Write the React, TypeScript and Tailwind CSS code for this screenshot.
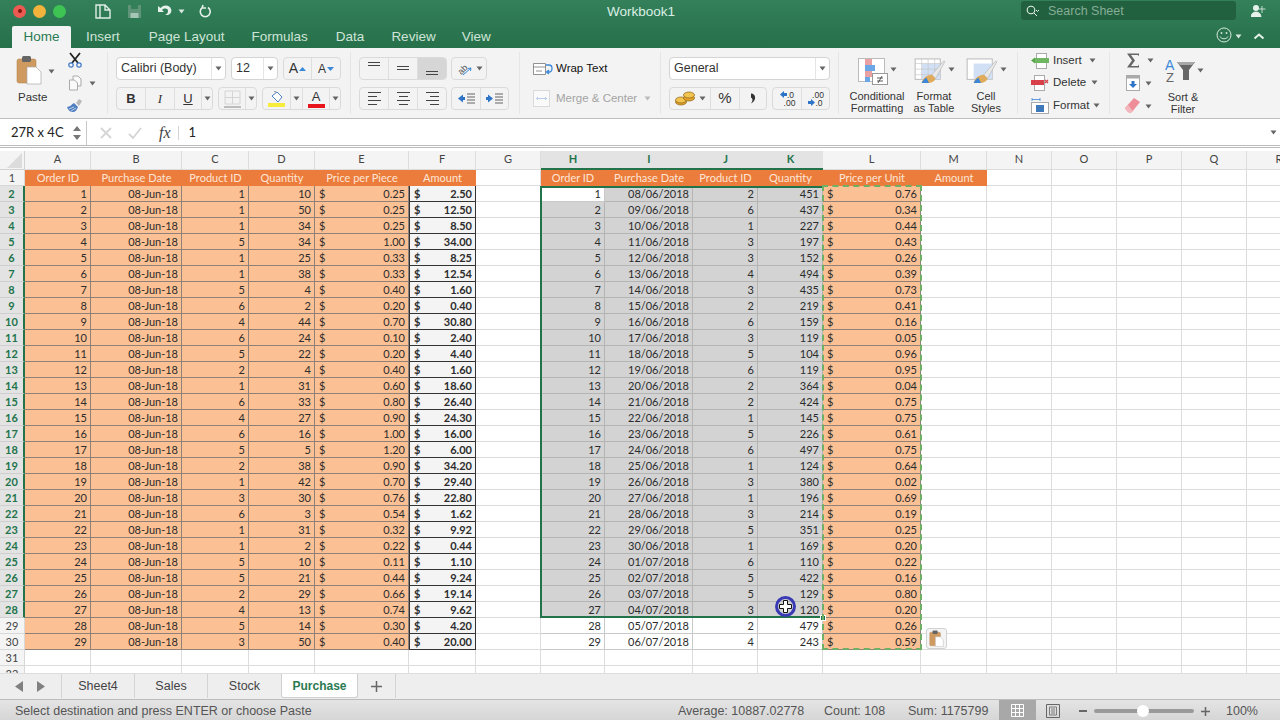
import React from "react";

const leftRows: [number, number, number, string, string][] = [
  [1, 1, 10, "0.25", "2.50"], [2, 1, 50, "0.25", "12.50"], [3, 1, 34, "0.25", "8.50"], [4, 5, 34, "1.00", "34.00"],
  [5, 1, 25, "0.33", "8.25"], [6, 1, 38, "0.33", "12.54"], [7, 5, 4, "0.40", "1.60"], [8, 6, 2, "0.20", "0.40"],
  [9, 4, 44, "0.70", "30.80"], [10, 6, 24, "0.10", "2.40"], [11, 5, 22, "0.20", "4.40"], [12, 2, 4, "0.40", "1.60"],
  [13, 1, 31, "0.60", "18.60"], [14, 6, 33, "0.80", "26.40"], [15, 4, 27, "0.90", "24.30"], [16, 6, 16, "1.00", "16.00"],
  [17, 5, 5, "1.20", "6.00"], [18, 2, 38, "0.90", "34.20"], [19, 1, 42, "0.70", "29.40"], [20, 3, 30, "0.76", "22.80"],
  [21, 6, 3, "0.54", "1.62"], [22, 1, 31, "0.32", "9.92"], [23, 1, 2, "0.22", "0.44"], [24, 5, 10, "0.11", "1.10"],
  [25, 5, 21, "0.44", "9.24"], [26, 2, 29, "0.66", "19.14"], [27, 4, 13, "0.74", "9.62"], [28, 5, 14, "0.30", "4.20"],
  [29, 3, 50, "0.40", "20.00"],
];

const rightRows: [string, number, number, string][] = [
  ["08/06", 2, 451, "0.76"], ["09/06", 6, 437, "0.34"], ["10/06", 1, 227, "0.44"], ["11/06", 3, 197, "0.43"],
  ["12/06", 3, 152, "0.26"], ["13/06", 4, 494, "0.39"], ["14/06", 3, 435, "0.73"], ["15/06", 2, 219, "0.41"],
  ["16/06", 6, 159, "0.16"], ["17/06", 3, 119, "0.05"], ["18/06", 5, 104, "0.96"], ["19/06", 6, 119, "0.95"],
  ["20/06", 2, 364, "0.04"], ["21/06", 2, 424, "0.75"], ["22/06", 1, 145, "0.75"], ["23/06", 5, 226, "0.61"],
  ["24/06", 6, 497, "0.75"], ["25/06", 1, 124, "0.64"], ["26/06", 3, 380, "0.02"], ["27/06", 1, 196, "0.69"],
  ["28/06", 3, 214, "0.19"], ["29/06", 5, 351, "0.25"], ["30/06", 1, 169, "0.20"], ["01/07", 6, 110, "0.22"],
  ["02/07", 5, 422, "0.16"], ["03/07", 5, 129, "0.80"], ["04/07", 3, 120, "0.20"], ["05/07", 2, 479, "0.26"],
  ["06/07", 4, 243, "0.59"],
];

const gridCols =
  "grid grid-cols-[25px_66px_91px_67px_66px_94px_67px_65px_64px_88px_65px_65px_98px_66px_65px_65px_65px_65px_65px]";
const blank = "border-r border-b border-[#dcdcdc]";
const orange = "bg-[#fbc093] border-r border-b border-[#8f8178] text-right pr-[3px]";
const selected = "bg-[#d3d3d3] border-r border-b border-[#b4b4b4] text-right pr-[3px]";
const plain = "border-r border-b border-[#c9c9c9] text-right pr-[3px]";

const Caret = ({ className = "" }: { className?: string }) => (
  <svg width="7" height="5" viewBox="0 0 7 5" className={className}>
    <path d="M0.5 0.5h6L3.5 4.5z" fill="#666" />
  </svg>
);

const Clipboard = ({ w = 26, h = 30 }: { w?: number; h?: number }) => (
  <svg width={w} height={h} viewBox="0 0 26 30">
    <rect x="1" y="4" width="19" height="24" rx="2" fill="#cf9a5f" stroke="#a87a45" strokeWidth="0.5" />
    <rect x="6" y="1" width="9" height="6" rx="1.5" fill="#666" />
    <path d="M11 12h9l5 5v12H11z" fill="#fff" stroke="#aaa" strokeWidth="0.7" />
  </svg>
);

const ScissorsIcon = () => (
  <svg width="16" height="16" viewBox="0 0 16 16">
    <path d="M3 1l8 10M13 1L5 11" stroke="#222" strokeWidth="1.8" />
    <circle cx="4" cy="13" r="2.2" fill="none" stroke="#3c78c4" strokeWidth="1.2" />
    <circle cx="12" cy="13" r="2.2" fill="none" stroke="#3c78c4" strokeWidth="1.2" />
  </svg>
);

const CopyIcon = () => (
  <svg width="15" height="16" viewBox="0 0 15 16">
    <path d="M5 1h5l3 3v7H5z" fill="#fafafa" stroke="#aaa" />
    <path d="M1.500 5h5l3 3v7h-8z" fill="#fafafa" stroke="#aaa" />
  </svg>
);

const BrushIcon = () => (
  <svg width="17" height="15" viewBox="0 0 17 15">
    <path d="M10 5l3-4 3 2-3 5z" fill="#b9b9b9" />
    <path d="M1 9c3 0 5-3 7-4l4 4c-1 3-3 5-5 5-3 0-5-2-6-5z" fill="#4d7fc0" />
    <path d="M3 11l5-2M5 13l5-3" stroke="#dce6f4" strokeWidth="0.8" />
  </svg>
);

const FormatTableIcon = ({ lines }: { lines: boolean }) => (
  <svg width="32" height="26" viewBox="0 0 34 28">
    <rect x="1" y="1" width="27" height="22" fill="#fff" stroke="#b5b5b5" />
    <rect x="8" y="6" width="20" height="17" fill="#d2e0f5" />
    {lines && <path d="M1 6h27M1 12h27M1 18h27M8 1v22M15 1v22M22 1v22" stroke="#c4c4c4" strokeWidth="0.7" />}
    <path d="M19 18L32 3l1 1-10 18z" fill="#e9e9e9" stroke="#aaa" strokeWidth="0.6" />
    <path d="M8 27c1-5 5-9 11-9l4 4c-1 3-4 5-8 5z" fill="#e0ac5c" />
    <path d="M8 27c1-2 2-4 5-6l3 6z" fill="#3e86d6" />
  </svg>
);

const Lines = ({ align }: { align: "left" | "center" | "right" }) => {
  const long = [0, 4, 8, 12];
  const widths = [13, 9, 13, 9];
  return (
    <svg width="15" height="13" viewBox="0 0 15 13">
      {long.map((y, i) => {
        const x = align === "left" ? 1 : align === "right" ? 14 - widths[i] : 7.500 - widths[i] / 2;
        return <path key={y} d={`M${x} ${y + 0.5}h${widths[i]}`} stroke="#444" strokeWidth="1" />;
      })}
    </svg>
  );
};

const Indent = ({ flip }: { flip?: boolean }) => (
  <svg width="17" height="11" viewBox="0 0 17 11">
    <path d={flip ? "M7 5.500L2 1.500v2.500H0v3h2v2.500z" : "M0 5.500l5-4v2.500h2v3H5v2.500z"} fill="#2e75c8" />
    <path d="M9 1h8M9 4h8M9 7h8M9 10h8" stroke="#555" strokeWidth="0.9" />
  </svg>
);

const Toolbutton = ({ className = "", children }: { className?: string; children?: React.ReactNode }) => (
  <div className={`h-full flex items-center justify-center border-r border-[#dedede] last:border-r-0 ${className}`}>{children}</div>
);

const BtnGroup = ({ className = "", children }: { className?: string; children?: React.ReactNode }) => (
  <div className={`h-[23px] flex bg-[#f3f3f3] border border-[#dadada] rounded-[4px] overflow-hidden ${className}`}>{children}</div>
);

const Row2Gap = "flex flex-col gap-[7px]";

const TitleBar = () => (
  <div className="h-[48px] shrink-0 bg-gradient-to-b from-[#33805a] to-[#26704a] relative text-white">
    <div className="h-[22px] flex items-center pl-[13px]">
      <span className="w-[13px] h-[13px] rounded-full bg-[#ee5a52] flex items-center justify-center">
        <span className="w-[4px] h-[4px] rounded-full bg-[#7d1810]" />
      </span>
      <span className="w-[13px] h-[13px] rounded-full bg-[#f3b23c] ml-[7px]" />
      <span className="w-[13px] h-[13px] rounded-full bg-[#3dc453] ml-[7px]" />
      <svg width="16" height="15" viewBox="0 0 16 15" className="ml-[29px]">
        <path d="M1 1h9l5 5v8H1zM5 1v13M10 1v5h5" fill="none" stroke="#dfeee6" strokeWidth="1.400" />
      </svg>
      <svg width="15" height="15" viewBox="0 0 15 15" className="ml-[16px]">
        <path d="M1 1h13v13H1z" fill="#5f9478" />
        <path d="M4 1h7v4H4z" fill="#33805a" />
        <path d="M3.500 9h8v5h-8z" fill="#a5c6b4" />
      </svg>
      <svg width="16" height="12" viewBox="0 0 16 12" className="ml-[15px]">
        <path d="M1 1v6h6L5 5c2-2 6-2 6 1 0 2-1 3-3 4h3c3-1 4-4 3-6C13 0 7-1 3.500 3z" fill="#e5f1ea" />
      </svg>
      <Caret className="ml-[5px] [&>path]:fill-[#d8e8df]" />
      <svg width="13" height="14" viewBox="0 0 13 14" className="ml-[14px]">
        <path d="M4 1l-1 3h4M3.500 3.500a5 5 0 1 0 5.500 0" fill="none" stroke="#e5f1ea" strokeWidth="1.600" />
      </svg>
    </div>
    <div className="absolute left-[607px] top-[3px] text-[13.500px] leading-[18px] font-['Liberation_Sans',sans-serif] text-[#dcefe5]">
      Workbook1
    </div>
    <div className="absolute left-[1021px] top-[1px] w-[215px] h-[19px] rounded-[3px] bg-[#22613f] flex items-center pl-[5px]">
      <svg width="14" height="12" viewBox="0 0 14 12">
        <circle cx="5" cy="5" r="3.800" fill="none" stroke="#e5f1ea" strokeWidth="1.100" />
        <path d="M8 8l3 3M10 5l1.500 1.500L13 5" fill="none" stroke="#e5f1ea" strokeWidth="1" />
      </svg>
      <span className="ml-[8px] mt-[2px] text-[12.500px] font-['Liberation_Sans',sans-serif] text-[#86ad97]">Search Sheet</span>
    </div>
    <svg width="15" height="12" viewBox="0 0 15 12" className="absolute left-[1251px] top-[5px]">
      <circle cx="5" cy="3" r="3" fill="#e5f1ea" />
      <path d="M0 12c0-3 2-5 5-5s5 2 5 5zM11 1v7M8 4h6.500" fill="#e5f1ea" stroke="#e5f1ea" strokeWidth="0.800" />
    </svg>
    <div className="absolute left-[12px] top-[26px] h-[22px] w-[59px] rounded-t-[2px] bg-[#f3f3f3] flex items-center justify-center text-[13.500px] font-['Liberation_Sans',sans-serif] text-[#2a7a52]">
      Home
    </div>
    <div className="absolute left-[86px] top-[26px] h-[22px] flex items-center text-[13.500px] font-['Liberation_Sans',sans-serif] text-[#cfe4d8]">
      <span>Insert</span>
      <span className="ml-[29px]">Page Layout</span>
      <span className="ml-[27px]">Formulas</span>
      <span className="ml-[28px]">Data</span>
      <span className="ml-[27px]">Review</span>
      <span className="ml-[26px]">View</span>
    </div>
    <svg width="16" height="16" viewBox="0 0 16 16" className="absolute left-[1216px] top-[27px]">
      <circle cx="8" cy="8" r="7" fill="none" stroke="#d8e8df" strokeWidth="1" />
      <circle cx="5.500" cy="6" r="0.900" fill="#d8e8df" />
      <circle cx="10.500" cy="6" r="0.900" fill="#d8e8df" />
      <path d="M4 9.500c1.500 3 6.500 3 8 0" fill="none" stroke="#d8e8df" strokeWidth="1" />
    </svg>
    <Caret className="absolute left-[1235px] top-[34px] [&>path]:fill-[#d8e8df]" />
    <svg width="12" height="7" viewBox="0 0 12 7" className="absolute left-[1253px] top-[33px]">
      <path d="M1.500 5.500L6 1.500l4.500 4" fill="none" stroke="#e5f1ea" strokeWidth="2" />
    </svg>
  </div>
);

const RibbonLabel = ({ children }: { children: React.ReactNode }) => (
  <div className="text-[11px] leading-[12px] text-center whitespace-nowrap text-[#333]">{children}</div>
);

const Ribbon = () => (
  <div className="h-[71px] shrink-0 bg-[#f3f3f3] border-b border-[#bdbdbd] flex font-['Liberation_Sans',sans-serif] text-[#333]">
    {/* clipboard */}
    <div className="w-[108px] h-[62px] mt-[4px] border-r border-[#e6e6e6] relative shrink-0">
      <div className="absolute left-[16px] top-[3px]"><Clipboard /></div>
      <Caret className="absolute left-[48px] top-[17px]" />
      <div className="absolute left-[18px] top-[39px] text-[11.500px] leading-[12px]">Paste</div>
      <div className="absolute left-[67px] top-[0px]"><ScissorsIcon /></div>
      <div className="absolute left-[68px] top-[23px]"><CopyIcon /></div>
      <Caret className="absolute left-[89px] top-[29px]" />
      <div className="absolute left-[66px] top-[46px]"><BrushIcon /></div>
    </div>
    {/* font */}
    <div className="w-[243px] shrink-0 pl-[8px] pt-[9px] border-r border-[#e6e6e6] h-[62px] mt-[4px] box-border">
      <div className={Row2Gap}>
        <div className="flex gap-[5px] -mt-[4px]">
          <div className="w-[110px] h-[23px] bg-white border border-[#d4d4d4] rounded-[4px] flex items-center pl-[4px] text-[12.500px] relative">
            Calibri (Body)
            <Caret className="absolute right-[3px] top-[8px]" />
            <span className="absolute right-[13px] top-0 h-full w-px bg-[#e5e5e5]" />
          </div>
          <div className="w-[47px] h-[23px] bg-white border border-[#d4d4d4] rounded-[4px] flex items-center pl-[4px] text-[12.500px] relative">
            12
            <Caret className="absolute right-[3px] top-[8px]" />
            <span className="absolute right-[13px] top-0 h-full w-px bg-[#e5e5e5]" />
          </div>
          <BtnGroup className="w-[58px]">
            <Toolbutton className="w-[29px] text-[14px]">A<svg width="7" height="4" viewBox="0 0 7 4" className="ml-px"><path d="M0 4h7L3.500 0z" fill="#3c88d8" /></svg></Toolbutton>
            <Toolbutton className="w-[29px] text-[12px]">A<svg width="7" height="4" viewBox="0 0 7 4" className="ml-px"><path d="M0 0h7L3.500 4z" fill="#3c88d8" /></svg></Toolbutton>
          </BtnGroup>
        </div>
        <div className="flex gap-[5px]">
          <BtnGroup className="w-[97px] text-[13px]">
            <Toolbutton className="w-[29px] font-bold">B</Toolbutton>
            <Toolbutton className="w-[29px] italic font-['Liberation_Serif',serif]">I</Toolbutton>
            <Toolbutton className="w-[27px] underline">U</Toolbutton>
            <Toolbutton className="flex-1"><Caret /></Toolbutton>
          </BtnGroup>
          <BtnGroup className="w-[39px]">
            <Toolbutton className="w-[27px]">
              <svg width="17" height="18" viewBox="0 0 17 18"><path d="M1 1h15v13H1zM8.500 1v13M1 7.500h15" fill="none" stroke="#d4d4d4" strokeWidth="1" /><path d="M0 17h17" stroke="#aaa" strokeWidth="1.500" /></svg>
            </Toolbutton>
            <Toolbutton className="flex-1"><Caret /></Toolbutton>
          </BtnGroup>
          <BtnGroup className="w-[79px]">
            <Toolbutton className="w-[28px] flex-col">
              <svg width="14" height="12" viewBox="0 0 14 12"><path d="M2 5l5-4 5 5-4 5z" fill="#fff" stroke="#4d7fc0" strokeWidth="1" /><path d="M6 1L4 0" stroke="#888" /></svg>
              <span className="w-[17px] h-[4px] bg-[#f7ec3a]" />
            </Toolbutton>
            <Toolbutton className="w-[12px]"><Caret /></Toolbutton>
            <Toolbutton className="w-[27px] flex-col text-[13px] leading-[14px]">
              A<span className="w-[17px] h-[4px] bg-[#e8141c]" />
            </Toolbutton>
            <Toolbutton className="flex-1"><Caret /></Toolbutton>
          </BtnGroup>
        </div>
      </div>
    </div>
    {/* alignment */}
    <div className="w-[169px] shrink-0 pl-[8px] h-[62px] mt-[4px] pt-[5px] border-r border-[#e6e6e6]">
      <div className={Row2Gap}>
        <div className="flex gap-[4px]">
          <BtnGroup className="w-[88px]">
            <Toolbutton className="w-[29px]"><svg width="14" height="6" viewBox="0 0 14 6" className="-mt-[7px]"><path d="M1 .500h12M1 3.500h12" stroke="#444" /></svg></Toolbutton>
            <Toolbutton className="w-[29px]"><svg width="14" height="5" viewBox="0 0 14 5"><path d="M1 .500h12M1 3.500h12" stroke="#444" /></svg></Toolbutton>
            <Toolbutton className="flex-1 bg-[#d6d6d6]"><svg width="14" height="5" viewBox="0 0 14 5" className="mt-[10px]"><path d="M1 .500h12M1 3.500h12" stroke="#444" /></svg></Toolbutton>
          </BtnGroup>
          <BtnGroup className="w-[36px]">
            <Toolbutton className="w-full">
              <svg width="18" height="16" viewBox="0 0 18 16" className="overflow-visible">
                <text x="2" y="12" fontSize="9" fill="#555" transform="rotate(-45 7 8)" fontFamily="Liberation Sans, sans-serif">ab</text>
                <path d="M8 14l8-7m0 0l-3 .500m3-.500l-.500 3" fill="none" stroke="#3c88d8" strokeWidth="1" />
              </svg>
              <Caret className="ml-[3px]" />
            </Toolbutton>
          </BtnGroup>
        </div>
        <div className="flex gap-[4px]">
          <BtnGroup className="w-[88px]">
            <Toolbutton className="w-[29px]"><Lines align="left" /></Toolbutton>
            <Toolbutton className="w-[29px]"><Lines align="center" /></Toolbutton>
            <Toolbutton className="flex-1"><Lines align="right" /></Toolbutton>
          </BtnGroup>
          <BtnGroup className="w-[58px]">
            <Toolbutton className="w-[29px]"><Indent /></Toolbutton>
            <Toolbutton className="flex-1"><Indent flip /></Toolbutton>
          </BtnGroup>
        </div>
      </div>
    </div>
    {/* wrap and merge */}
    <div className="w-[141px] shrink-0 pl-[13px] h-[62px] mt-[4px] pt-[5px] border-r border-[#e6e6e6] flex flex-col gap-[7px] text-[11.500px]">
      <div className="h-[23px] flex items-center text-[#111]">
        <svg width="20" height="13" viewBox="0 0 20 13">
          <path d="M.500 1.500h12v11H.500zM.500 5h12M3 9h6" fill="#fff" stroke="#777" strokeWidth="0.800" />
          <path d="M13 3h3c4 0 4 7 0 7h-2m2-2l-2.500 2 2.500 2" fill="none" stroke="#3c88d8" strokeWidth="1.300" />
        </svg>
        <span className="ml-[3px]">Wrap Text</span>
      </div>
      <div className="h-[23px] flex items-center text-[#a4a4a4]">
        <svg width="17" height="17" viewBox="0 0 17 17">
          <rect x=".500" y=".500" width="16" height="16" fill="#fafafa" stroke="#dadada" />
          <path d="M3.500 8.500h10M5 7l-1.500 1.500L5 10M12 7l1.500 1.500L12 10" fill="none" stroke="#a9c4e2" strokeWidth="0.800" />
        </svg>
        <span className="ml-[6px]">Merge &amp; Center</span>
        <Caret className="ml-[7px] opacity-40" />
      </div>
    </div>
    {/* number */}
    <div className="w-[178px] shrink-0 pl-[8px] h-[62px] mt-[4px] pt-[5px] border-r border-[#e6e6e6]">
      <div className={Row2Gap}>
        <div className="w-[161px] h-[23px] bg-white border border-[#d4d4d4] rounded-[4px] flex items-center pl-[4px] text-[12.500px] relative">
          General
          <Caret className="absolute right-[3px] top-[8px]" />
          <span className="absolute right-[13px] top-0 h-full w-px bg-[#e5e5e5]" />
        </div>
        <div className="flex gap-[5px]">
          <BtnGroup className="w-[98px]">
            <Toolbutton className="w-[41px]">
              <svg width="20" height="16" viewBox="0 0 20 16">
                <ellipse cx="6" cy="11" rx="5.500" ry="3" fill="#e2a42e" stroke="#8d6410" strokeWidth="0.700" />
                <ellipse cx="6" cy="9" rx="5.500" ry="3" fill="#f2c452" stroke="#8d6410" strokeWidth="0.700" />
                <ellipse cx="14" cy="7" rx="5.500" ry="3" fill="#e2a42e" stroke="#8d6410" strokeWidth="0.700" />
                <ellipse cx="14" cy="4" rx="5.500" ry="3" fill="#f2c452" stroke="#8d6410" strokeWidth="0.700" />
              </svg>
              <Caret className="ml-[4px]" />
            </Toolbutton>
            <Toolbutton className="w-[29px] text-[15px]">%</Toolbutton>
            <Toolbutton className="flex-1 text-[18px] font-bold leading-[10px]">
              <svg width="7" height="11" viewBox="0 0 7 11"><path d="M1 .500c5 0 6 7 0 10 2-3 2-5 0-6z" fill="#333" /></svg>
            </Toolbutton>
          </BtnGroup>
          <BtnGroup className="w-[58px] text-[8.500px] leading-[8px]">
            <Toolbutton className="w-[29px] flex-col">
              <span className="flex items-center"><svg width="7" height="7" viewBox="0 0 7 7"><path d="M0 3.500L4 0v2h3v3H4v2z" fill="#2e75c8" /></svg>.0</span>
              <span className="ml-[5px]">.00</span>
            </Toolbutton>
            <Toolbutton className="flex-1 flex-col">
              <span className="ml-[5px]">.00</span>
              <span className="flex items-center"><svg width="7" height="7" viewBox="0 0 7 7"><path d="M7 3.500L3 0v2H0v3h3v2z" fill="#2e75c8" /></svg>.0</span>
            </Toolbutton>
          </BtnGroup>
        </div>
      </div>
    </div>
    {/* styles */}
    <div className="w-[179px] shrink-0 h-[62px] mt-[4px] border-r border-[#e6e6e6] flex pl-[8px]">
      <div className="w-[60px] flex flex-col items-center">
        <div className="h-[40px] flex items-start pt-[6px]">
          <svg width="30" height="27" viewBox="0 0 30 27">
            <rect x=".500" y=".500" width="26" height="23" fill="#fff" stroke="#bbb" />
            <rect x="7" y="1" width="7" height="6" fill="#e9a1a4" />
            <rect x="7" y="7" width="10" height="6" fill="#6ba6e6" />
            <rect x="7" y="13" width="7" height="6" fill="#e9a1a4" />
            <rect x="7" y="19" width="5" height="5" fill="#6ba6e6" />
            <rect x="14.500" y="15.500" width="15" height="11" fill="#fff" stroke="#999" />
            <path d="M19 20h6M19 23h6M20 25l4-7" stroke="#333" strokeWidth="0.800" />
          </svg>
          <Caret className="mt-[9px] ml-[2px]" />
        </div>
        <RibbonLabel>Conditional<br />Formatting</RibbonLabel>
      </div>
      <div className="w-[50px] ml-[2px] flex flex-col items-center">
        <div className="h-[40px] flex items-start pt-[6px]">
          <FormatTableIcon lines />
          <Caret className="mt-[9px] ml-[2px]" />
        </div>
        <RibbonLabel>Format<br />as Table</RibbonLabel>
      </div>
      <div className="w-[42px] ml-[6px] flex flex-col items-center">
        <div className="h-[40px] flex items-start pt-[6px]">
          <FormatTableIcon lines={false} />
          <Caret className="mt-[9px] ml-[2px]" />
        </div>
        <RibbonLabel>Cell<br />Styles</RibbonLabel>
      </div>
    </div>
    {/* cells */}
    <div className="w-[92px] shrink-0 h-[62px] mt-[4px] pl-[13px] border-r border-[#e6e6e6] flex flex-col text-[11.500px] gap-[5px]">
      <div className="h-[18px] flex items-center">
        <svg width="18" height="16" viewBox="0 0 18 16">
          <rect x="5.500" y=".500" width="10" height="15" fill="#fff" stroke="#aaa" />
          <rect x="4" y="5" width="14" height="5" fill="#6fb562" />
          <path d="M0 7.500l4-3v6z" fill="#5aa64c" />
        </svg>
        <span className="ml-[4px]">Insert</span>
        <Caret className="ml-[7px]" />
      </div>
      <div className="h-[18px] flex items-center">
        <svg width="18" height="16" viewBox="0 0 18 16">
          <rect x="3.500" y=".500" width="10" height="15" fill="#fff" stroke="#aaa" />
          <rect x="0" y="5" width="13" height="5" fill="#d8404a" />
          <path d="M14 5l3 3m0-3l-3 3" stroke="#d8404a" strokeWidth="1.200" />
        </svg>
        <span className="ml-[4px]">Delete</span>
        <Caret className="ml-[5px]" />
      </div>
      <div className="h-[18px] flex items-center">
        <svg width="18" height="17" viewBox="0 0 18 17">
          <path d="M1 1v3M9 1v3M1 2.500h8" stroke="#3c88d8" strokeWidth="0.800" />
          <rect x=".500" y="5.500" width="17" height="11" fill="#fff" stroke="#aaa" />
          <rect x="5" y="8" width="8" height="7" fill="#3f78bb" />
        </svg>
        <span className="ml-[4px]">Format</span>
        <Caret className="ml-[4px]" />
      </div>
    </div>
    {/* editing */}
    <div className="flex-1 h-[62px] mt-[4px] pl-[15px] relative">
      <svg width="14" height="15" viewBox="0 0 14 15" className="absolute left-[16px] top-[1px]"><path d="M1 .500h12v3l-1-1.500H5l4 5.500-4 5.500h7l1-1.500v3H1l5-7z" fill="#666" /></svg>
      <Caret className="absolute left-[37px] top-[6px]" />
      <svg width="14" height="16" viewBox="0 0 14 16" className="absolute left-[16px] top-[23px]">
        <rect x=".500" y=".500" width="13" height="15" fill="#fff" stroke="#aaa" />
        <rect x=".500" y=".500" width="13" height="3" fill="#aaa" />
        <path d="M7 13l-4-4h2.500V6h3v3H11z" fill="#2e75c8" />
      </svg>
      <Caret className="absolute left-[35px] top-[29px]" />
      <svg width="17" height="17" viewBox="0 0 17 17" className="absolute left-[14px] top-[45px]">
        <path d="M1 11L10 1l6 4-8 10c-2 2-5 0-7-4z" fill="#ee8e98" />
        <path d="M1 11c2 4 5 6 7 4l1-1-5-6z" fill="#f2b8bd" />
      </svg>
      <Caret className="absolute left-[35px] top-[52px]" />
      <svg width="32" height="28" viewBox="0 0 32 28" className="absolute left-[55px] top-[5px] overflow-visible">
        <text x="0" y="13" fontSize="14" fill="#3c88d8" fontFamily="Liberation Sans, sans-serif">A</text>
        <text x="1" y="25" fontSize="13" fill="#666" fontFamily="Liberation Sans, sans-serif">Z</text>
        <path d="M12 5h18l-6 8v10h-6V13z" fill="#666" />
        <path d="M12 5h18l-3 3H15z" fill="#a8a8a8" />
      </svg>
      <Caret className="absolute left-[87px] top-[16px]" />
      <div className="absolute left-[54px] top-[39px] w-[38px]"><RibbonLabel>Sort &amp;<br />Filter</RibbonLabel></div>
    </div>
  </div>
);

const FormulaBar = () => (
  <div className="h-[29px] shrink-0 pt-[2px] bg-white border-b-[3px] border-double border-[#bcbcbc] flex items-center font-['Lato',sans-serif] text-[13px] text-[#222] relative">
    <div className="w-[87px] h-full border-r border-[#c8c8c8] flex items-center pl-[11px] relative">
      27R x 4C
      <svg width="8" height="16" viewBox="0 0 8 16" className="absolute left-[73px] top-[4px]">
        <path d="M0 6l4-5 4 5zM0 10l4 5 4-5z" fill="#777" />
      </svg>
    </div>
    <svg width="12" height="12" viewBox="0 0 12 12" className="ml-[13px]"><path d="M1 1l10 10M11 1L1 11" stroke="#d5d5d5" strokeWidth="1.800" /></svg>
    <svg width="14" height="12" viewBox="0 0 14 12" className="ml-[16px]"><path d="M1 7l4 4 8-10" fill="none" stroke="#d5d5d5" strokeWidth="1.800" /></svg>
    <span className="ml-[17px] font-['Liberation_Serif',serif] italic text-[16px] text-[#444]">fx</span>
    <span className="ml-[7px] h-[14px] w-px bg-[#d5d5d5]" />
    <span className="ml-[10px]">1</span>
    <Caret className="absolute right-[3px] top-[11px]" />
  </div>
);

const letters = ["A", "B", "C", "D", "E", "F", "G", "H", "I", "J", "K", "L", "M", "N", "O", "P", "Q", "R"];

const ColHeaders = () => (
  <div className={`${gridCols} h-[19px] mt-[3px] bg-[#f4f4f4]`}>
    <div className="border-r border-b border-[#d2d2d2] relative overflow-hidden">
      <svg width="15" height="15" viewBox="0 0 15 15" className="absolute right-[2px] bottom-[1px]"><path d="M15 0v15H0z" fill="#dcdcdc" /></svg>
    </div>
    {letters.map((l) => {
      const active = l === "H" || l === "I" || l === "J" || l === "K";
      return (
        <div
          key={l}
          className={
            active
              ? "bg-[#e3e3e3] border-b-2 border-[#22734a] text-[#22734a] font-bold text-center leading-[16px]"
              : "border-r border-b border-[#dcdcdc] text-center leading-[16px] text-[#444]"
          }
        >
          {l}
        </div>
      );
    })}
  </div>
);

const RowHead = ({ n }: { n: number }) => {
  const active = n >= 2 && n <= 28;
  return (
    <div
      className={
        active
          ? "bg-[#e3e3e3] border-r-2 border-b border-r-[#22734a] border-b-[#cfcfcf] text-center text-[#22734a] font-bold"
          : "bg-[#f4f4f4] border-r border-b border-[#d8d8d8] text-center text-[#444]"
      }
    >
      {n}
    </div>
  );
};

const Money = ({ v, className }: { v: string; className: string }) => (
  <div className={`${className} flex justify-between pl-[4px]`}>
    <span>$</span>
    <span>{v}</span>
  </div>
);

const headLeft = ["Order ID", "Purchase Date", "Product ID", "Quantity", "Price per Piece", "Amount"];
const headRight = ["Order ID", "Purchase Date", "Product ID", "Quantity", "Price per Unit", "Amount"];

const Sheet = () => (
  <div className="flex-1 overflow-hidden relative bg-white font-['Lato',sans-serif] text-[11px] leading-[15px] text-[#2c2c2c]">
    <ColHeaders />
    <div className={`${gridCols} h-[16px]`}>
      <RowHead n={1} />
      {headLeft.map((h) => (
        <div key={h} className="bg-[#ec7c3c] text-[#fde6d6] text-center whitespace-nowrap">{h}</div>
      ))}
      <div className={blank} />
      {headRight.map((h, i) => (
        <div key={i} className="bg-[#ec7c3c] text-[#fde6d6] text-center whitespace-nowrap">{h}</div>
      ))}
      {["N", "O", "P", "Q", "R"].map((k) => <div key={k} className={blank} />)}
    </div>
    {leftRows.map((r, i) => {
      const right = rightRows[i];
      const inSel = i < 27;
      const cls = inSel ? selected : plain;
      return (
        <div key={i} className={`${gridCols} h-[16px]`}>
          <RowHead n={i + 2} />
          <div className={orange}>{r[0]}</div>
          <div className={orange}>08-Jun-18</div>
          <div className={orange}>{r[1]}</div>
          <div className={orange}>{r[2]}</div>
          <Money v={r[3]} className={orange} />
          <Money v={r[4]} className="bg-[#f4f4f4] border border-t-0 border-[#333] text-right pr-[3px] font-bold" />
          <div className={blank} />
          <div className={i === 0 ? "bg-white text-right pr-[3px] border-b border-r border-[#c9c9c9]" : cls}>{r[0]}</div>
          <div className={cls}>{right[0]}/2018</div>
          <div className={cls}>{right[1]}</div>
          <div className={cls}>{right[2]}</div>
          <Money v={right[3]} className={orange} />
          {["M", "N", "O", "P", "Q", "R"].map((k) => <div key={k} className={blank} />)}
        </div>
      );
    })}
    {[31, 32].map((n) => (
      <div key={n} className={`${gridCols} h-[16px]`}>
        <RowHead n={n} />
        {letters.map((k) => <div key={k} className={blank} />)}
      </div>
    ))}
    {/* selection and copy outlines */}
    <div className="absolute left-[540px] top-[38px] w-[283px] h-[432px] border-2 border-r-0 border-[#22734a] pointer-events-none" />
    <div className="absolute left-[820px] top-[467px] w-[6px] h-[6px] bg-[#22734a] border border-white" />
    <div className="absolute left-[822px] top-[37px] w-[100px] h-[465px] border-2 border-dashed border-[#6eb065] pointer-events-none" />
    {/* cell cursor */}
    <div className="absolute left-[775px] top-[448px] w-[21px] h-[21px] rounded-full border-[3px] border-[#3a3ab4] flex items-center justify-center">
      <svg width="13" height="13" viewBox="0 0 13 13">
        <path d="M4.500 .500h4v4h4v4h-4v4h-4v-4h-4v-4h4z" fill="#fff" stroke="#111" strokeWidth="1" />
      </svg>
    </div>
    {/* paste options */}
    <div className="absolute left-[926px] top-[480px] w-[21px] h-[21px] rounded-[3px] bg-[#f4f4f4] border border-[#d2d2d2] flex items-center justify-center">
      <Clipboard w={15} h={17} />
    </div>
  </div>
);

const Tabs = () => (
  <div className="h-[27px] shrink-0 bg-[#eeeeee] border-t border-[#dedede] border-b border-b-[#bcbcbc] flex font-['Liberation_Sans',sans-serif] text-[12.500px] text-[#444]">
    <div className="w-[62px] h-[24px] border-r border-[#d4d4d4] flex items-center pl-[15px] gap-[12px]">
      <svg width="9" height="11" viewBox="0 0 9 11"><path d="M8 0v11L0 5.500z" fill="#808080" /></svg>
      <svg width="9" height="11" viewBox="0 0 9 11"><path d="M1 0v11l8-5.500z" fill="#808080" /></svg>
    </div>
    <div className="w-[73px] h-[24px] border-r border-[#d4d4d4] flex items-center justify-center">Sheet4</div>
    <div className="w-[73px] h-[24px] border-r border-[#d4d4d4] flex items-center justify-center">Sales</div>
    <div className="w-[73px] h-[24px] flex items-center justify-center">Stock</div>
    <div className="w-[77px] h-[24px] bg-white rounded-b-[3px] border-x border-b border-[#cfcfcf] flex items-center justify-center font-bold text-[12px] text-[#2a7a52]">Purchase</div>
    <div className="w-[38px] h-[24px] border-r border-[#d4d4d4] flex items-center justify-center">
      <svg width="11" height="11" viewBox="0 0 11 11"><path d="M5.500 0v11M0 5.500h11" stroke="#666" strokeWidth="1.500" /></svg>
    </div>
  </div>
);

const StatusBar = () => (
  <div className="flex-1 pt-[3px] bg-gradient-to-b from-[#e4e4e4] to-[#d6d6d6] flex items-center font-['Liberation_Sans',sans-serif] text-[12.500px] text-[#555] relative">
    <span className="ml-[15px]">Select destination and press ENTER or choose Paste</span>
    <span className="absolute left-[678px]">Average: 10887.02778</span>
    <span className="absolute left-[824px]">Count: 108</span>
    <span className="absolute left-[908px]">Sum: 1175799</span>
    <div className="absolute left-[999px] top-0 w-[37px] h-full bg-[#a8a8a8] flex items-center justify-center">
      <svg width="13" height="13" viewBox="0 0 13 13"><path d="M.500 .500h12v12H.500zM4.500 .500v12M8.500 .500v12M.500 4.500h12M.500 8.500h12" fill="none" stroke="#fff" /></svg>
    </div>
    <svg width="14" height="14" viewBox="0 0 14 14" className="absolute left-[1046px] top-[4px]">
      <path d="M.500 .500h13v13H.500z" fill="none" stroke="#666" />
      <path d="M3.500 3h7v8h-7zM5 5h4M5 7h4M5 9h4" fill="none" stroke="#666" strokeWidth="0.800" />
    </svg>
    <span className="absolute left-[1079px] top-[10px] w-[8px] h-[2px] bg-[#666]" />
    <div className="absolute left-[1094px] top-[9px] w-[100px] h-[4px] rounded-full bg-[#9a9a9a]" />
    <div className="absolute left-[1137px] top-[5px] w-[12px] h-[12px] rounded-full bg-white" />
    <svg width="9" height="9" viewBox="0 0 9 9" className="absolute left-[1201px] top-[7px]"><path d="M4.500 0v9M0 4.500h9" stroke="#666" strokeWidth="1.500" /></svg>
    <span className="absolute left-[1226px]">100%</span>
  </div>
);

export default function App() {
  return (
    <div className="w-[1280px] h-[720px] overflow-hidden flex flex-col bg-white">
      <TitleBar />
      <Ribbon />
      <FormulaBar />
      <Sheet />
      <Tabs />
      <div className="h-[20px] shrink-0 flex"><StatusBar /></div>
    </div>
  );
}
